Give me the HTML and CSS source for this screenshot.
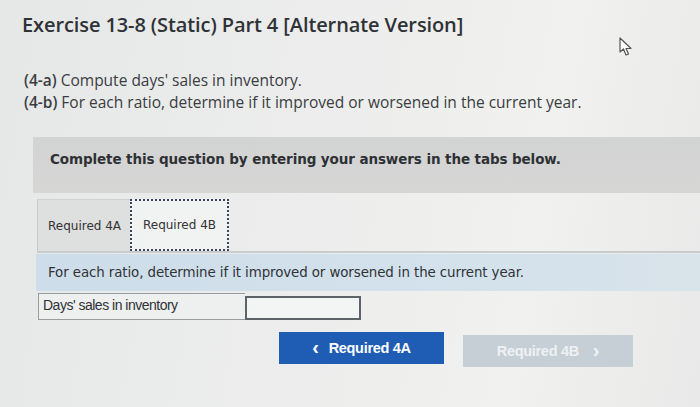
FILE: index.html
```html
<!DOCTYPE html>
<html>
<head>
<meta charset="utf-8">
<link rel="stylesheet" href="styles.css">
</head>
<body>
<div class="page">
  <h1 class="title">Exercise 13-8 (Static) Part 4 [Alternate Version]</h1>
  <div class="cursor">
    <svg width="14" height="20" viewBox="0 0 14 20"><path d="M1 1 L1 15 L4.5 12 L7 18 L9.5 17 L7 11.5 L12 11.5 Z" fill="#fff" stroke="#555" stroke-width="1.2" stroke-linejoin="round"/></svg>
  </div>
  <div class="intro">
    <p><b>(4-a)</b> Compute days' sales in inventory.</p>
    <p><b>(4-b)</b> For each ratio, determine if it improved or worsened in the current year.</p>
  </div>
  <div class="notice">Complete this question by entering your answers in the tabs below.</div>
  <div class="tabs">
    <div class="tab">Required 4A</div>
    <div class="tab active">Required 4B</div>
  </div>
  <div class="panel">For each ratio, determine if it improved or worsened in the current year.</div>
  <div class="row">
    <div class="label">Days' sales in inventory</div>
    <div class="cell"><div class="input"></div></div>
  </div>
  <div class="nav">
    <div class="btn prev"><span class="chev">&#x2039;</span> Required 4A</div>
    <div class="btn next">Required 4B <span class="chev">&#x203A;</span></div>
  </div>
</div>
</body>
</html>
```
FILE: styles.css
```css
html, body {
  margin: 0;
  padding: 0;
}
body {
  width: 700px;
  height: 407px;
  overflow: hidden;
  background: linear-gradient(100deg, #e6e8e8 0%, #ecedec 45%, #f1f1ef 75%, #e8e9e8 100%);
  font-family: "Open Sans", "Liberation Sans", sans-serif;
  color: #333;
}
.page {
  position: relative;
  padding-top: 11px;
}
.title {
  margin: 0 0 0 22px;
  font-family: "Open Sans", sans-serif;
  font-weight: 600;
  font-size: 20px;
  letter-spacing: -0.1px;
  line-height: 28px;
  color: #2f3236;
}
.cursor {
  position: absolute;
  left: 619px;
  top: 37px;
}
.intro {
  margin: 30px 0 0 24px;
  font-size: 15.5px;
  line-height: 22px;
  color: #3a3d42;
  letter-spacing: 0;
}
.intro p {
  margin: 0;
}
.intro b {
  font-weight: 600;
}
.notice {
  margin: 24px 0 0 33px;
  height: 56px;
  box-sizing: border-box;
  padding: 14px 0 0 17px;
  background: linear-gradient(180deg, #d2d3d3 0%, #d6d6d5 100%);
  font-family: "DejaVu Sans", Verdana, sans-serif;
  font-weight: bold;
  font-size: 13.5px;
  color: #2e3134;
  letter-spacing: -0.1px;
}
.tabs {
  display: flex;
  margin: 6px 0 0 37px;
  height: 52px;
  border-bottom: 2px solid #c9cccd;
}
.tab {
  display: flex;
  align-items: center;
  box-sizing: border-box;
  padding: 0 0 0 10px;
  white-space: nowrap;
  font-family: "DejaVu Sans", Verdana, sans-serif;
  font-size: 12px;
  color: #333;
  background: #dedfdf;
  border-left: 1px solid #c9cbcb;
  border-top: 1px solid #d0d2d2;
  width: 93px;
}
.tab.active {
  background: #f1f2f2;
  border: 2px dotted #3c4360;
  width: 99px;
  justify-content: center;
  padding: 0;
}
.panel {
  margin: 1px 0 0 36px;
  height: 37px;
  box-sizing: border-box;
  padding: 11px 0 0 12px;
  background: linear-gradient(90deg, #cddde9 0%, #d4e2ec 70%, #d9e3ea 100%);
  font-family: "DejaVu Sans", Verdana, sans-serif;
  font-size: 13.4px;
  color: #2f3338;
  letter-spacing: -0.1px;
}
.row {
  display: flex;
  margin: 2px 0 0 38px;
  height: 27px;
}
.label {
  width: 207px;
  box-sizing: border-box;
  border: 1px solid #9a9d9f;
  border-right: none;
  padding: 3px 0 0 4px;
  font-family: "Liberation Sans", Arial, sans-serif;
  font-size: 14px;
  letter-spacing: -0.5px;
  color: #2f3236;
  background: #eeefef;
}
.cell {
  width: 116px;
  box-sizing: border-box;
  padding: 3px 0 0 0;
}
.input {
  height: 24px;
  box-sizing: border-box;
  border: 2px solid #5e636a;
  background: #f3f4f4;
}
.nav {
  display: flex;
  align-items: flex-start;
  margin: 12px 0 0 279px;
  gap: 19px;
}
.btn {
  display: flex;
  align-items: center;
  justify-content: center;
  height: 32px;
  font-family: "Liberation Sans", Arial, sans-serif;
  font-weight: bold;
  font-size: 14.5px;
  letter-spacing: -0.3px;
}
.btn.prev {
  width: 165px;
  background: #1f5cb3;
  color: #fff;
}
.btn.next {
  width: 170px;
  margin-top: 3px;
  background: #c7cfd6;
  color: #eef1f4;
}
.chev {
  font-size: 20px;
  font-weight: bold;
  line-height: 1;
  margin: -3px 10px 0 0;
}
.btn.next .chev {
  margin: -3px 0 0 14px;
}
```
